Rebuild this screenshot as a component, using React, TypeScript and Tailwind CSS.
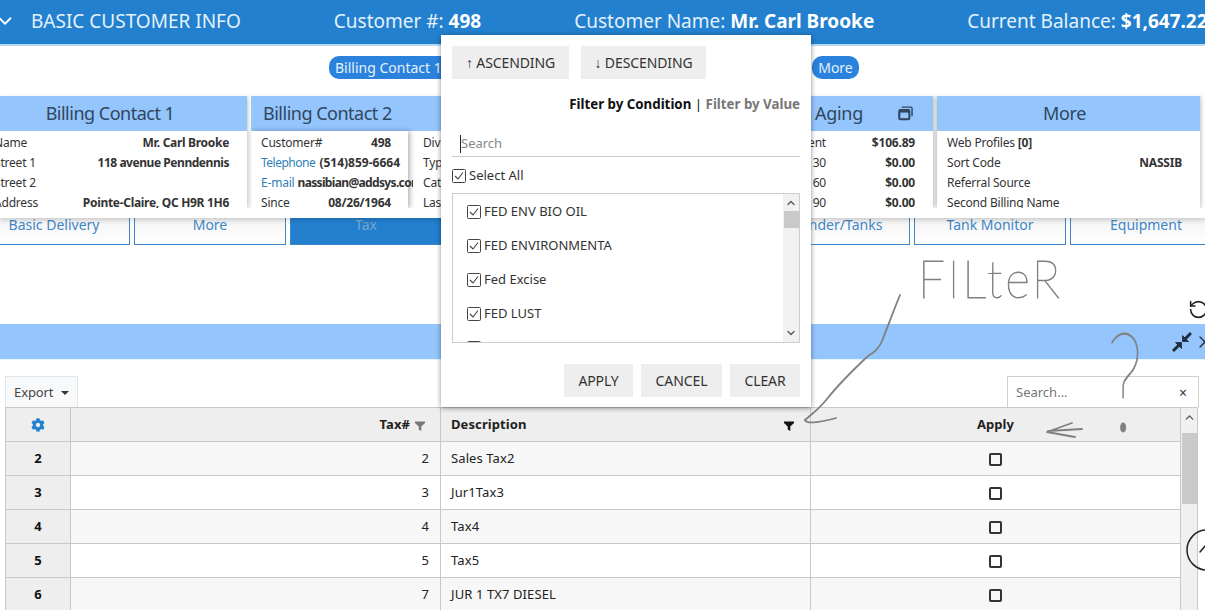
import React from "react";
import { FaCog } from "react-icons/fa";
import { RotateCcw, X, ChevronDown, ChevronUp } from "lucide-react";

const Funnel = ({ className }: { className: string }) => (
  <svg viewBox="0 0 10 10" className={className} fill="currentColor"><path d="M0 0.5h10v1.6L6.3 5.6V10L3.7 8.6V5.6L0 2.1z" /></svg>
);

const Check = ({ checked = true }: { checked?: boolean }) => (
  <svg viewBox="0 0 14 14" className="w-[14px] h-[14px] shrink-0 text-[#444]" fill="none" stroke="currentColor">
    <rect x="0.5" y="0.5" width="13" height="13" rx="1" />
    {checked && <path d="M3 7l3 3 5-6.5" strokeWidth="1.1" />}
  </svg>
);

const Row = ({ l, v, cl = "", r = "" }: { l: string; v?: string; cl?: string; r?: string }) => (
  <div className="flex justify-between h-5 items-center whitespace-nowrap">
    <span className={cl}>{l}</span>
    {v && <span className={`font-bold ${r}`}>{v}</span>}
  </div>
);

const tabs = ["Basic Delivery", "More", "Tax", "", "", "Cylinder/Tanks", "Tank Monitor", "Equipment"];
const rows = [
  ["2", "2", "Sales Tax2"],
  ["3", "3", "Jur1Tax3"],
  ["4", "4", "Tax4"],
  ["5", "5", "Tax5"],
  ["6", "7", "JUR 1 TX7 DIESEL"],
];
const items = ["FED ENV BIO OIL", "FED ENVIRONMENTA", "Fed Excise", "FED LUST"];
const cell = "border-r border-b border-[#c8c8c8] flex items-center h-[34px] pt-[1px]";

export default function App() {
  return (
    <div className="relative w-[1205px] h-[610px] overflow-hidden bg-white text-[#222] text-[13px] font-['Noto_Sans','Open_Sans',sans-serif]">
      {/* Header */}
      <div className="h-[46px] pb-[2px] bg-[#2280cf] border-b-2 border-[#b9d9f3] flex items-center text-[19px] text-[#e4f1fb] whitespace-nowrap">
        <ChevronDown className="w-[22px] h-[22px] shrink-0 ml-[-6px] mr-[15px] text-white" strokeWidth={2} />
        <span>BASIC CUSTOMER INFO</span>
        <span className="ml-[93px]">Customer #: <b className="text-white">498</b></span>
        <span className="ml-[93px]">Customer Name: <b className="text-white">Mr. Carl Brooke</b></span>
        <span className="ml-[93px]">Current Balance: <b className="text-white">$1,647.22</b></span>
      </div>

      {/* Pills */}
      <div className="h-[50px] pt-[10px] flex items-start pl-[329px] text-[14px] text-[#e4f1fb] whitespace-nowrap">
        <span className="h-[23px] w-[150px] rounded-l-[10px] rounded-r-[10px] bg-[#2b82dc] px-[6px] flex items-center">Billing Contact 1</span>
        <span className="ml-[333px] h-[23px] w-[47px] rounded-[10px] bg-[#2b82dc] flex items-center justify-center">More</span>
      </div>

      {/* Cards */}
      <div className="relative z-10 h-[122px] bg-white shadow-[0_2px_5px_rgba(0,0,0,0.18)]">
        <div className="h-[112px] overflow-hidden flex gap-1 ml-[-16px] text-[12px] text-[#333] tracking-[-0.2px]">
          <div className="w-[263px] shrink-0 shadow-[0_0_5px_rgba(0,0,0,0.35)]">
            <div className="h-[35px] bg-[#94c5fd] flex items-center justify-center pr-[11px] text-[18px] tracking-[-0.5px] text-[#30475e]">Billing Contact 1</div>
            <div className="pt-[2px] pl-[10px] pr-[18px]">
              <Row l="Name" v="Mr. Carl Brooke" r="tracking-[-0.3px]" />
              <Row l="Street 1" v="118 avenue Penndennis" r="tracking-[-0.45px]" />
              <Row l="Street 2" />
              <Row l="Address" v="Pointe-Claire, QC H9R 1H6" r="tracking-[-0.3px]" />
            </div>
          </div>
          <div className="w-[415px] shrink-0">
            <div className="h-[35px] bg-[#94c5fd] flex items-center pl-[12px] text-[18px] tracking-[-0.5px] text-[#30475e]">Billing Contact 2</div>
            <div className="flex">
              <div className="w-[157px] shrink-0 h-[77px] pt-[2px] pl-[10px] shadow-[2px_0_5px_rgba(0,0,0,0.3)]">
                <div className="w-[130px]"><Row l="Customer#" v="498" /></div>
                <div className="w-[139px]"><Row l="Telephone" v="(514)859-6664" cl="text-[#2f7fb8] tracking-[-0.5px]" r="tracking-[0px]" /></div>
                <div className="w-[152px] flex gap-[3px] h-5 items-center whitespace-nowrap overflow-hidden">
                  <span className="text-[#2f7fb8]">E-mail</span>
                  <b className="tracking-[-0.65px]">nassibian@addsys.com</b>
                </div>
                <div className="w-[130px]"><Row l="Since" v="08/26/1964" /></div>
              </div>
              <div className="ml-[15px] pt-[2px]">
                <Row l="Division" />
                <Row l="Type" />
                <Row l="Category" />
                <Row l="Last" />
              </div>
            </div>
          </div>
          <div className="w-[263px] shrink-0 shadow-[0_0_5px_rgba(0,0,0,0.35)]">
            <div className="h-[35px] bg-[#94c5fd] flex items-center pl-[145px] pr-[20px] justify-between text-[18px] tracking-[-0.3px] text-[#30475e]">
              <span>Aging</span>
              <svg viewBox="0 0 16 16" className="w-[15px] h-[15px] text-[#30475e]" fill="none" stroke="currentColor" strokeWidth="1.5">
                <rect x="1" y="4" width="11.5" height="10.5" rx="1.5" fill="#30475e" />
                <rect x="2.5" y="7" width="8.5" height="6" fill="#94c5fd" stroke="none" />
                <path d="M4 1.2h9.5a1.5 1.5 0 0 1 1.5 1.5V11" />
              </svg>
            </div>
            <div className="pt-[2px] pl-[120px] pr-[18px]">
              {[["Current", "$106.89"], ["Over 30", "$0.00"], ["Over 60", "$0.00"], ["Over 90", "$0.00"]].map(([l, v]) => (
                <div key={l} className="flex justify-between h-5 items-center whitespace-nowrap">
                  <span className="w-[36px] text-right flex justify-end">{l}</span>
                  <b>{v}</b>
                </div>
              ))}
            </div>
          </div>
          <div className="w-[263px] shrink-0 shadow-[0_0_5px_rgba(0,0,0,0.35)]">
            <div className="h-[35px] bg-[#94c5fd] flex items-center justify-center pr-[8px] text-[18px] tracking-[-0.3px] text-[#30475e]">More</div>
            <div className="pt-[2px] pl-[10px] pr-[18px]">
              <div className="h-5 flex items-center">Web Profiles&nbsp;<b>[0]</b></div>
              <Row l="Sort Code" v="NASSIB" />
              <Row l="Referral Source" />
              <Row l="Second Billing Name" />
            </div>
          </div>
        </div>
      </div>

      {/* Tabs */}
      <div className="mt-[-13px] flex gap-1 ml-[-22px] w-[1244px] text-[14px] text-[#3f86c8]">
        {tabs.map((t, i) => (
          <div
            key={i}
            className={`w-[152px] h-[40px] shrink-0 flex items-center justify-center border-x border-b border-[#3f86c8] ${
              t === "Tax" ? "bg-[#2280cf] text-[#78a6cd]" : "bg-gradient-to-b from-[#eeeeee] to-white"
            }`}
          >
            {t}
          </div>
        ))}
      </div>

      {/* Reset */}
      <div className="h-[79px] pt-[54px] pl-[1188px]">
        <RotateCcw className="w-[21px] h-[21px] text-[#222]" strokeWidth={1.8} />
      </div>

      {/* Blue bar */}
      <div className="h-[36px] bg-[#94c5fd] border-b border-[#e3f5fb] flex items-center pl-[1172px] gap-[3px]">
        <svg viewBox="0 0 20 20" className="w-[20px] h-[20px] shrink-0 text-[#1f2d3d]" fill="currentColor" stroke="currentColor">
          <path d="M1 19L8 12M19 1L12 8" strokeWidth="3" />
          <path d="M3.5 10.5L9.5 10.5L9.5 16.5zM16.5 9.5L10.5 9.5L10.5 3.5z" strokeWidth="0.8" />
        </svg>
        <X className="w-[20px] h-[20px] shrink-0 text-[#1f2d3d]" strokeWidth={1.5} />
      </div>

      {/* Toolbar */}
      <div className="mt-[16px] h-[31px] pl-[5px] pr-[6px] flex justify-between">
        <div className="w-[73px] border border-[#e2e5e8] border-b-0 bg-[#f8f9fa] flex items-center pl-[8px] pt-[1px] gap-[8px] text-[#444] tracking-[-0.1px]">
          Export
          <span className="border-x-[4px] border-x-transparent border-t-[4px] border-t-[#333]" />
        </div>
        <div className="w-[192px] border border-[#cfcfcf] border-b-0 flex items-center justify-between pl-[8px] pr-[11px] pt-[1px] text-[#777]">
          Search...
          <span className="text-[#333] text-[14px]">×</span>
        </div>
      </div>

      {/* Table */}
      <div className="ml-[5px] w-[1194px] flex items-start tracking-[0.1px]">
        <div className="w-[1176px] shrink-0 border-t border-l border-[#c8c8c8] grid grid-cols-[65px_370px_370px_370px] auto-rows-max">
          <div className={`${cell} bg-[#eeeeee] justify-center`}><FaCog className="w-[14px] h-[14px] text-[#2280cf]" /></div>
          <div className={`${cell} bg-[#eeeeee] justify-end pr-[15px] gap-[5px] font-bold`}>
            Tax#<Funnel className="w-[10px] h-[10px] text-[#777] mt-[2px]" />
          </div>
          <div className={`${cell} bg-[#eeeeee] justify-between pl-[10px] pr-[16px] font-bold`}>
            Description<Funnel className="w-[10px] h-[10px] text-[#111] mt-[2px]" />
          </div>
          <div className={`${cell} bg-[#eeeeee] justify-center font-bold`}>Apply</div>
          {rows.map(([n, t, d], i) => (
            <React.Fragment key={n}>
              <div className={`${cell} bg-[#eeeeee] justify-center font-bold text-[#111]`}>{n}</div>
              <div className={`${cell} justify-end pr-[11px] ${i % 2 ? "bg-white" : "bg-[#f7f7f7]"}`}>{t}</div>
              <div className={`${cell} pl-[10px] ${i % 2 ? "bg-white" : "bg-[#f7f7f7]"}`}>{d}</div>
              <div className={`${cell} justify-center ${i % 2 ? "bg-white" : "bg-[#f7f7f7]"}`}>
                <span className="w-[13px] h-[13px] border-2 border-[#333] rounded-[2px]" />
              </div>
            </React.Fragment>
          ))}
        </div>
        <div className="w-[17px] border-t border-r border-[#c8c8c8] bg-[#f0f0f0] h-[210px] shrink-0 flex flex-col items-center">
          <ChevronUp className="w-[13px] h-[13px] mt-[3px] text-[#555]" strokeWidth={2.5} />
          <div className="w-[15px] h-[71px] bg-[#c9c9c9] mt-[9px]" />
        </div>
      </div>

      {/* Filter popover */}
      <div className="absolute z-20 left-[441px] top-[35px] w-[370px] h-[372px] bg-white shadow-[0_1px_5px_rgba(0,0,0,0.45)] px-[11px] pt-[11px]">
        <div className="flex gap-3 text-[14px] text-[#333] tracking-[-0.1px]">
          <div className="w-[117px] h-[33px] bg-[#eeeeee] flex items-center justify-center">↑ ASCENDING</div>
          <div className="w-[125px] h-[33px] bg-[#eeeeee] flex items-center justify-center">↓ DESCENDING</div>
        </div>
        <div className="mt-[15px] text-right font-bold text-[13.3px] text-[#111] leading-[20px]">
          Filter by Condition <span className="font-normal">|</span> <span className="text-[#777]">Filter by Value</span>
        </div>
        <div className="mt-[16px] h-[27px] border-b border-[#cccccc] pl-[8px] pt-[1px] flex items-center text-[#888]">
          <span className="w-px h-[18px] bg-[#222]" />Search
        </div>
        <div className="h-[36px] flex items-center gap-[3px] pt-[1px] text-[#333]"><Check />Select All</div>
        <div className="h-[150px] border border-[#cccccc] flex overflow-hidden text-[#333]">
          <div className="flex-1 pl-[14px] pt-[1px] overflow-hidden">
            {[...items, ""].map((t, i) => (
              <div key={i} className="h-[34px] flex items-center gap-[3px]"><Check />{t}</div>
            ))}
          </div>
          <div className="w-[16px] bg-[#f1f1f1] flex flex-col items-center">
            <ChevronUp className="w-[12px] h-[12px] mt-[3px] text-[#555]" strokeWidth={2.5} />
            <div className="w-[15px] h-[17px] bg-[#c9c9c9] mt-[2px]" />
            <ChevronDown className="w-[12px] h-[12px] mt-[99px] text-[#555]" strokeWidth={2.5} />
          </div>
        </div>
        <div className="mt-[21px] flex justify-end gap-2 text-[14px] text-[#333] tracking-[-0.1px]">
          <div className="w-[69px] h-[33px] bg-[#eeeeee] flex items-center justify-center">APPLY</div>
          <div className="w-[81px] h-[33px] bg-[#eeeeee] flex items-center justify-center">CANCEL</div>
          <div className="w-[70px] h-[33px] bg-[#eeeeee] flex items-center justify-center">CLEAR</div>
        </div>
      </div>

      {/* Hand annotations */}
      <svg className="absolute z-30 left-0 top-0 w-[1205px] h-[610px] pointer-events-none" viewBox="0 0 1205 610" fill="none" stroke="#808080" strokeWidth="1.8" strokeLinecap="round" strokeLinejoin="round">
        <path d="M900 295C893 312 888 326 882 341C878 350 874 352 868 356C852 371 838 385 827 399C820 408 812 414 805 420" />
        <path d="M805 420C806 424 818 423 836 418" />
        <path d="M1072 423L1047 432L1075 437M1048 431L1082 429" />
        <path d="M1187 550a20 20 0 0 1 20-20M1187 550a20 20 0 0 0 20 20" stroke="#222" strokeWidth="1.5" />
        <path d="M1200 552L1205 546" stroke="#222" strokeWidth="1.5" />
      </svg>
      <span className="absolute z-30 left-[918px] top-[247px] text-[52px] leading-[62px] origin-top-left scale-x-[0.92] font-['Lato',sans-serif] font-thin text-[#808080] [-webkit-text-stroke:0.8px_#808080] tracking-[3px] whitespace-nowrap">FILteR</span>
      <span className="absolute z-30 left-[1090px] top-[303px] w-[70px] text-center text-[138px] leading-[150px] scale-x-[0.62] font-['Lato',sans-serif] font-thin text-[#808080] [-webkit-text-stroke:0.8px_#808080]">?</span>
    </div>
  );
}
